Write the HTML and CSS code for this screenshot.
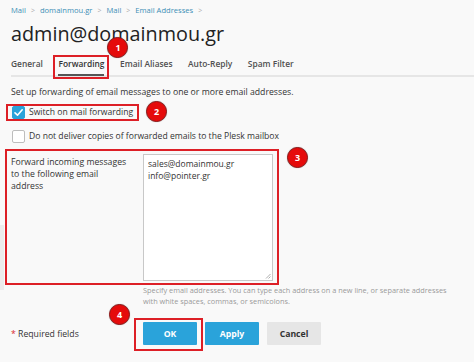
FILE: index.html
```html
<!DOCTYPE html>
<html lang="en">
<head>
<meta charset="utf-8">
<title>admin@domainmou.gr</title>
<link rel="stylesheet" href="styles.css">
</head>
<body>
<div class="handle"></div>
<div class="page">
  <nav class="crumbs">
    <a>Mail</a><span class="sep">&gt;</span><a>domainmou.gr</a><span class="sep">&gt;</span><a>Mail</a><span class="sep">&gt;</span><a>Email Addresses</a><span class="sep">&gt;</span>
  </nav>
  <h1 class="title">admin@domainmou.gr</h1>
  <div class="tabs">
    <div class="tab">General</div>
    <div class="tab active mark">Forwarding<span class="badge b1">1</span></div>
    <div class="tab">Email Aliases</div>
    <div class="tab">Auto-Reply</div>
    <div class="tab">Spam Filter</div>
  </div>
  <p class="intro">Set up forwarding of email messages to one or more email addresses.</p>
  <div class="check-line first">
    <label class="check mark">
      <span class="box checked"><svg viewBox="0 0 13 13" width="13" height="13"><path d="M3 6.8 L5.5 9.2 L10.2 3.8" fill="none" stroke="#fff" stroke-width="1.6" stroke-linecap="round" stroke-linejoin="round"/></svg></span>
      <span>Switch on mail forwarding</span>
      <span class="badge b2">2</span>
    </label>
  </div>
  <div class="check-line second">
    <label class="check">
      <span class="box"></span>
      <span>Do not deliver copies of forwarded emails to the Plesk mailbox</span>
    </label>
  </div>
  <div class="field-row mark">
    <div class="field-label">Forward incoming messages to the following email address</div>
    <div class="textarea">
      <div>sales@domainmou.gr</div>
      <div>info@pointer.gr</div>
      <svg class="grip" viewBox="0 0 6 6" width="6" height="6"><path d="M5.5 1 L1 5.5 M5.5 3.5 L3.5 5.5" stroke="#999" stroke-width="0.8"/></svg>
    </div>
    <span class="badge b3">3</span>
  </div>
  <p class="hint">Specify email addresses. You can type each address on a new line, or separate addresses with white spaces, commas, or semicolons.</p>
  <div class="footer">
    <div class="required"><span class="star">*</span> Required fields</div>
    <div class="buttons">
      <button class="btn primary mark">OK<span class="badge b4">4</span></button>
      <button class="btn primary">Apply</button>
      <button class="btn">Cancel</button>
    </div>
  </div>
</div>
</body>
</html>
```
FILE: styles.css
```css
html, body {
  margin: 0;
  padding: 0;
}
body {
  background: #f9f9f9;
  font-family: "Open Sans", "Noto Sans", sans-serif;
  color: #333;
  width: 474px;
  height: 362px;
  overflow: hidden;
  position: relative;
}
.handle {
  position: absolute;
  left: 0;
  top: 225px;
  width: 4px;
  height: 65px;
  background: #ececec;
}
.page {
  padding: 0 11px;
}
.crumbs {
  height: 20px;
  display: flex;
  align-items: center;
  font-size: 7.6px;
}
.crumbs a {
  color: #3d8fb6;
}
.crumbs .sep {
  color: #aaa;
  margin: 0 5px;
  font-size: 7px;
}
.title {
  margin: 0;
  height: 28px;
  line-height: 28px;
  font-size: 19.8px;
  font-weight: 400;
  color: #222;
}
.tabs {
  display: flex;
  margin-top: 7px;
  border-bottom: 2px solid #e6e6e6;
  margin-right: -11px;
}
.tab {
  font-size: 8.4px;
  font-weight: 600;
  color: #505050;
  padding: 2px 0 5px;
  margin-right: 15.6px;
  line-height: 13px;
  position: relative;
}
.tab.active {
  color: #333;
  box-shadow: inset 0 -2px 0 #555;
  margin-bottom: -1px;
  padding-bottom: 6px;
}
.mark {
  position: relative;
}
.tab.mark::after {
  content: "";
  position: absolute;
  left: -5px;
  right: -5px;
  top: 0;
  bottom: -3px;
  border: 2px solid #dd1f26;
}
.badge {
  position: absolute;
  width: 19px;
  height: 19px;
  border-radius: 50%;
  background: #e50b0b;
  border: 1.5px solid #8f1a1a;
  color: #fff;
  font-size: 9px;
  font-weight: 700;
  line-height: 19px;
  text-align: center;
  box-shadow: 0 0 1px rgba(0,0,0,.4);
  font-family: "Open Sans", sans-serif;
}
.b1 { left: 49px; top: -18px; }
.intro {
  margin: 9px 0 0;
  font-size: 8.7px;
  line-height: 12px;
}
.check-line {
  display: flex;
  font-size: 8.6px;
  line-height: 13px;
}
.check-line.first {
  margin-top: 8px;
  padding-left: 1px;
}
.check-line.second {
  margin-top: 11px;
  padding-left: 1px;
}
.check {
  display: flex;
  align-items: center;
  gap: 4px;
}
.check.mark::after {
  content: "";
  position: absolute;
  left: -6px;
  top: -2px;
  right: -6px;
  bottom: -2px;
  border: 2px solid #dd1f26;
}
.b2 { left: 134px; top: -5px; }
.box {
  width: 13px;
  height: 13px;
  box-sizing: border-box;
  border: 1px solid #bdbdbd;
  border-radius: 2px;
  background: #fff;
  display: flex;
}
.box.checked {
  background: #2aa3da;
  border-color: #2aa3da;
}
.box.checked svg {
  margin: -1px;
}
.field-row {
  display: flex;
  margin: 6px 0 0 -6px;
  padding: 5px 6px 4px 6px;
  width: 262px;
}
.field-row.mark::after {
  content: "";
  position: absolute;
  left: 0;
  top: 0;
  right: 0;
  bottom: 0;
  border: 2px solid #dd1f26;
}
.field-label {
  width: 132px;
  font-size: 8.7px;
  line-height: 12px;
  padding-top: 2px;
  box-sizing: border-box;
  padding-right: 12px;
}
.textarea {
  width: 130px;
  height: 127px;
  box-sizing: border-box;
  background: #fff;
  border: 1px solid #c8c8c8;
  padding: 3px 4px;
  font-size: 8.5px;
  line-height: 12px;
  position: relative;
}
.grip {
  position: absolute;
  right: 1px;
  bottom: 1px;
}
.b3 { left: 282px; top: -2px; }
.hint {
  margin: 0 0 0 132px;
  max-width: 312px;
  font-size: 7.35px;
  line-height: 11px;
  color: #9a9a9a;
}
.footer {
  display: flex;
  align-items: center;
  margin-top: 15px;
}
.required {
  width: 132px;
  font-size: 8.7px;
}
.star {
  color: #d9262c;
}
.buttons {
  display: flex;
  gap: 8px;
}
.btn {
  width: 54px;
  height: 23px;
  border: none;
  border-radius: 1px;
  font-family: "Open Sans", sans-serif;
  font-size: 8.7px;
  font-weight: 700;
  background: #e6e6e6;
  color: #333;
  padding: 0;
}
.btn.primary {
  background: #2aa3da;
  color: #fff;
}
.btn.mark::after {
  content: "";
  position: absolute;
  left: -9px;
  top: -4px;
  right: -6px;
  bottom: -6px;
  border: 2px solid #dd1f26;
}
.b4 { left: -34px; top: -18px; }
```
